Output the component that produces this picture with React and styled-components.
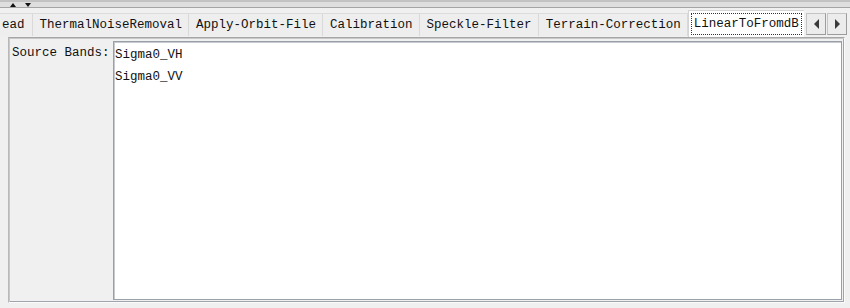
import React from 'react';
import styled, { createGlobalStyle } from 'styled-components';

const GlobalStyle = createGlobalStyle`
    html, body {
        margin: 0;
        padding: 0;
        background: #f0f0f0;
    }
    body {
        font-family: "Liberation Mono", "DejaVu Sans Mono", monospace;
        font-size: 12.5px;
        color: #111;
    }
`

/* window frame */
const Frame = styled.div`
    width: 850px;
    height: 308px;
    display: flex;
    flex-direction: column;
    overflow: hidden;
    background: #f0f0f0;
`

/* the collapse bar above the tabs */
const SplitBar = styled.div`
    height: 5px;
    display: flex;
    align-items: center;
    gap: 9px;
    padding-left: 10px;
    background: #dedede;
    border-top: 2px solid #c2c2c2;
    border-bottom: 1px solid #a4a4a4;
`

const Arrow = styled.span`
    width: 0;
    height: 0;
    border-left: 3px solid transparent;
    border-right: 3px solid transparent;
    ${p => p.$up
        ? 'border-bottom: 4px solid #111;'
        : 'border-top: 4px solid #111;'}
`

/* tab strip */
const TabStrip = styled.div`
    height: 29px;
    display: flex;
    align-items: flex-end;
`

const Tabs = styled.div`
    flex: 1;
    display: flex;
    align-items: flex-end;
    overflow: hidden;
    height: 100%;
`

const Tab = styled.div`
    flex: none;
    height: ${p => p.$active ? '27px' : '23px'};
    margin-bottom: ${p => p.$active ? '0' : '1px'};
    padding: ${p => p.$active ? '2px' : p.$first ? '0 7px 0 2px' : '0 6px 0 7px'};
    box-sizing: border-box;
    display: flex;
    align-items: center;
    white-space: pre;
    background: ${p => p.$active ? '#ffffff' : '#eeeeee'};
    border-top: 1px solid ${p => p.$active ? '#d4d4d4' : '#dcdcdc'};
    border-right: 1px solid ${p => p.$active ? '#d4d4d4' : '#d9d9d9'};
    border-left: ${p => p.$active ? '1px solid #d4d4d4' : 'none'};
`

const FocusBox = styled.div`
    height: 100%;
    box-sizing: border-box;
    padding: 0 2px;
    display: flex;
    align-items: center;
    border: 1px dotted #333;
`

const ScrollButtons = styled.div`
    flex: none;
    display: flex;
    gap: 1px;
    margin: 0 3px 2px 2px;
`

const ScrollButton = styled.div`
    width: 18px;
    height: 20px;
    display: flex;
    align-items: center;
    justify-content: center;
    background: #ececec;
    border: 1px solid #c4c4c4;
    border-right-color: #9c9c9c;
    border-bottom-color: #9c9c9c;
`

const Tri = styled.span`
    width: 0;
    height: 0;
    border-top: 5px solid transparent;
    border-bottom: 5px solid transparent;
    ${p => p.$left
        ? 'border-right: 5px solid #3a3a3a;'
        : 'border-left: 5px solid #3a3a3a;'}
`

/* tab content */
const Panel = styled.div`
    width: 837px;
    height: 266px;
    margin-left: 8px;
    box-sizing: border-box;
    padding: 3px 2px 2px 2px;
    display: flex;
    background: #f0f0f0;
    border: 1px solid #fbfbfb;
    border-top-color: #a6a6a6;
    border-left-color: #b8b8b8;
    box-shadow: inset 1px 1px 0 #c8c8c8, inset -1px -1px 0 #a0a5ad;
`

const Label = styled.div`
    width: 101px;
    flex: none;
    padding: 5px 0 0 1px;
    white-space: pre;
`

const ListBox = styled.div`
    flex: 1;
    box-sizing: border-box;
    padding: 2px 1px;
    background: #ffffff;
    border: 1px solid #9aa0a8;
    box-shadow: inset 1px 1px 0 #c6c9ce;
`

const Item = styled.div`
    height: 22px;
    line-height: 22px;
    padding-left: 0;
`

const tabs = [
    'ead',
    'ThermalNoiseRemoval',
    'Apply-Orbit-File',
    'Calibration',
    'Speckle-Filter',
    'Terrain-Correction',
];

const bands = ['Sigma0_VH', 'Sigma0_VV'];

const App = () => {
    return (
        <Frame>
            <GlobalStyle />
            <SplitBar>
                <Arrow $up />
                <Arrow />
            </SplitBar>
            <TabStrip>
                <Tabs>
                    {tabs.map((name, idx) =>
                        <Tab key={name} $first={idx === 0}>{name}</Tab>
                    )}
                    <Tab $active>
                        <FocusBox>LinearToFromdB</FocusBox>
                    </Tab>
                </Tabs>
                <ScrollButtons>
                    <ScrollButton><Tri $left /></ScrollButton>
                    <ScrollButton><Tri /></ScrollButton>
                </ScrollButtons>
            </TabStrip>
            <Panel>
                <Label>Source Bands:</Label>
                <ListBox>
                    {bands.map(band => <Item key={band}>{band}</Item>)}
                </ListBox>
            </Panel>
        </Frame>
    );
}

export default App;
